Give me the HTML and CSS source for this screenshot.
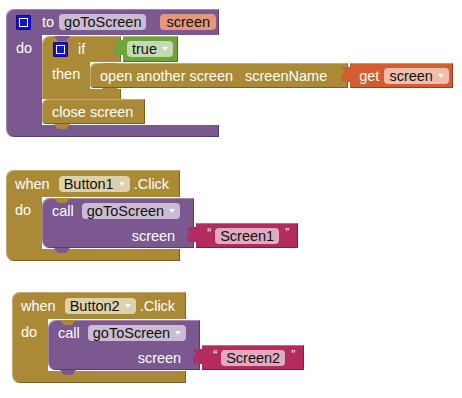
FILE: index.html
```html
<!DOCTYPE html>
<html lang="en">
<head>
    <meta charset="UTF-8">
    <meta name="viewport" content="width=device-width, initial-scale=1.0">
    <title>goToScreen blocks</title>
    <link rel="stylesheet" href="styles.css">
</head>
<body>
    <div class="workspace">
        <!-- procedure definition -->
        <div class="block proc group-1">
            <div class="head proc-head">
                <span class="mutator"></span>
                <span class="lbl lbl-to">to</span>
                <span class="field">goToScreen</span>
                <span class="field param">screen</span>
            </div>
            <div class="mid">
                <div class="spine">do</div>
                <div class="stack">
                    <div class="stmt ctrl if-block">
                        <div class="head">
                            <span class="mutator"></span>
                            <span class="lbl lbl-if">if</span>
                            <div class="plug">
                                <div class="val logic">
                                    <span class="field">true<i class="arrow"></i></span>
                                </div>
                            </div>
                        </div>
                        <div class="mid">
                            <div class="spine then">then</div>
                            <div class="stack">
                                <div class="stmt ctrl row open-block">
                                    <span class="lbl">open another screen</span>
                                    <span class="lbl arg">screenName</span>
                                    <div class="plug">
                                        <div class="val var get">
                                            <span class="lbl">get</span>
                                            <span class="field">screen<i class="arrow"></i></span>
                                        </div>
                                    </div>
                                </div>
                            </div>
                        </div>
                        <div class="foot"></div>
                    </div>
                    <div class="stmt ctrl row close-block">close screen</div>
                </div>
            </div>
            <div class="foot"></div>
        </div>

        <!-- Button1 click -->
        <div class="block ctrl group-2">
            <div class="head event-head">
                <span class="lbl">when</span>
                <span class="field">Button1<i class="arrow"></i></span>
                <span class="lbl lbl-click">.Click</span>
            </div>
            <div class="mid">
                <div class="spine event-do">do</div>
                <div class="stack">
                    <div class="stmt proc call-block">
                        <div class="call-head">
                            <span class="lbl">call</span>
                            <span class="field">goToScreen<i class="arrow"></i></span>
                        </div>
                        <div class="call-args">
                            <span class="lbl">screen</span>
                            <div class="plug">
                                <div class="val text">
                                    <span class="quote">&ldquo;</span>
                                    <span class="field">Screen1</span>
                                    <span class="quote">&rdquo;</span>
                                </div>
                            </div>
                        </div>
                    </div>
                </div>
            </div>
            <div class="foot"></div>
        </div>

        <!-- Button2 click -->
        <div class="block ctrl group-3">
            <div class="head event-head">
                <span class="lbl">when</span>
                <span class="field">Button2<i class="arrow"></i></span>
                <span class="lbl lbl-click">.Click</span>
            </div>
            <div class="mid">
                <div class="spine event-do">do</div>
                <div class="stack">
                    <div class="stmt proc call-block">
                        <div class="call-head">
                            <span class="lbl">call</span>
                            <span class="field">goToScreen<i class="arrow"></i></span>
                        </div>
                        <div class="call-args">
                            <span class="lbl">screen</span>
                            <div class="plug">
                                <div class="val text">
                                    <span class="quote">&ldquo;</span>
                                    <span class="field">Screen2</span>
                                    <span class="quote">&rdquo;</span>
                                </div>
                            </div>
                        </div>
                    </div>
                </div>
            </div>
            <div class="foot"></div>
        </div>
    </div>
</body>
</html>
```

FILE: styles.css
```css
/* Canvas */
* {
    box-sizing: border-box;
}

body {
    margin: 0;
    background: #fff;
    font-family: "Liberation Sans", Arial, sans-serif;
    font-size: 14.5px;
    color: #fff;
}

.workspace {
    position: relative;
    width: 462px;
    height: 398px;
    overflow: hidden;
    white-space: nowrap;
}

/* Block colours */
.proc { --c: #7b5890; }
.ctrl { --c: #aa8a36; }
.logic { --c: #6fa43d; }
.var { --c: #d25d2e; }
.text { --c: #b42c5d; }

/* Top-level groups sit freely on the canvas */
.block {
    position: absolute;
    display: flex;
    flex-direction: column;
    width: max-content;
}

.group-1 { left: 6px; top: 9px; }
.group-2 { left: 6px; top: 170px; }
.group-3 { left: 12px; top: 292px; }

/* C-shaped block parts */
.head {
    display: flex;
    align-items: center;
    height: 26px;
    padding-left: 10px;
    background: var(--c);
    border-radius: 8px 0 0 0;
    box-shadow: inset 1px 1px rgba(255, 255, 255, 0.28), inset -1px 0 rgba(0, 0, 0, 0.25);
}

.mid {
    display: flex;
}

.spine {
    width: 36px;
    padding-left: 10px;
    line-height: 26px;
    background: var(--c);
    box-shadow: inset 1px 0 rgba(255, 255, 255, 0.28);
}

.stack {
    --host: var(--c);
    width: 0;
    display: flex;
    flex-direction: column;
    padding: 1px 0;
}

.foot {
    height: 12px;
    background: var(--c);
    border-radius: 0 0 0 8px;
    box-shadow: inset 1px 0 rgba(255, 255, 255, 0.28), inset -1px -1px rgba(0, 0, 0, 0.3);
}

/* Statement blocks */
.stmt {
    position: relative;
    width: max-content;
    display: flex;
    flex-direction: column;
}

.stack > .stmt:first-child::before {
    content: "";
    position: absolute;
    left: 12px;
    top: 0;
    width: 16px;
    height: 5px;
    background: var(--host);
    clip-path: polygon(0 0, 100% 0, 75% 100%, 25% 100%);
    z-index: 1;
}

.stmt::after {
    content: "";
    position: absolute;
    left: 12px;
    top: 100%;
    width: 16px;
    height: 5px;
    background: var(--c);
    clip-path: polygon(0 0, 100% 0, 75% 100%, 25% 100%);
}

.stmt.row {
    flex-direction: row;
    align-items: center;
    height: 25px;
    padding-left: 10px;
    background: var(--c);
    border-radius: 6px 0 0 4px;
    box-shadow: inset 1px 1px rgba(255, 255, 255, 0.28), inset -1px -1px rgba(0, 0, 0, 0.3);
}

/* Value inputs */
.plug {
    display: flex;
    width: 0;
    align-self: stretch;
}

.val {
    position: relative;
    flex: none;
    display: flex;
    align-items: center;
    margin-left: 2px;
    background: var(--c);
    box-shadow: inset 0 1px rgba(255, 255, 255, 0.3), inset -1px -1px rgba(0, 0, 0, 0.3);
}

.val::before {
    content: "";
    position: absolute;
    left: -9px;
    top: 4px;
    width: 10px;
    height: 15px;
    background: var(--c);
    border-radius: 3px 0 0 3px;
    clip-path: polygon(0 0, 100% 0, 100% 100%, 0 100%, 0 45%, 3px 40%, 3px 22%, 0 18%);
}

/* Editable fields */
.field {
    display: inline-flex;
    align-items: center;
    height: 16px;
    padding: 0 5px;
    border-radius: 4px;
    background: rgba(255, 255, 255, 0.6);
    color: #111;
}

.field.param {
    background: #e4987a;
    padding: 0 6px;
}

.arrow {
    display: inline-block;
    margin-left: 5px;
    border-left: 3.5px solid transparent;
    border-right: 3.5px solid transparent;
    border-top: 4px solid rgba(255, 255, 255, 0.85);
}

.mutator {
    display: flex;
    align-items: center;
    justify-content: center;
    width: 15px;
    height: 15px;
    background: #1414c8;
    border-radius: 2px;
    box-shadow: inset 0 0 0 1px #0a0a96;
}

.mutator::after {
    content: "";
    width: 7px;
    height: 7px;
    border: 1.5px solid #fff;
}

/* Procedure header */
.proc-head {
    padding-right: 3px;
}

.lbl-to {
    margin: 0 5px 0 11px;
}

.proc-head .param {
    margin-left: 14px;
}

/* if / then */
.if-block {
    min-width: 79px;
}

.if-block > .head {
    padding-left: 11px;
}

.lbl-if {
    margin-left: 10px;
}

.if-block > .head .plug {
    margin-left: auto;
}

.logic {
    padding: 0 5px 0 4px;
}

.spine.then {
    width: 48px;
    line-height: 25px;
}

.if-block > .foot {
    height: 10px;
    border-radius: 0;
    box-shadow: inset 1px 0 rgba(255, 255, 255, 0.28), inset -1px 0 rgba(0, 0, 0, 0.25);
}

/* open another screen */
.open-block .arg {
    margin-left: 12px;
}

.open-block .plug {
    margin-left: 21px;
}

.get {
    padding: 0 4px 0 9px;
}

.get .field {
    margin-left: 5px;
}

.close-block {
    padding-right: 12px;
}

/* Event blocks */
.event-head {
    height: 27px;
    padding: 0 11px 0 9px;
}

.event-head .field {
    margin-left: 9px;
}

.lbl-click {
    margin-left: 4px;
}

.spine.event-do {
    padding-left: 9px;
}

/* Procedure call */
.call-block {
    background: var(--c);
    border-radius: 8px 0 0 8px;
    box-shadow: inset 1px 1px rgba(255, 255, 255, 0.28), inset -1px -1px rgba(0, 0, 0, 0.3);
}

.call-head {
    display: flex;
    align-items: center;
    gap: 8px;
    height: 25px;
    padding: 0 14px 0 10px;
}

.call-args {
    display: flex;
    align-items: center;
    height: 25px;
}

.call-args > .lbl {
    margin-left: auto;
}

.call-args .plug {
    margin-left: 19px;
}

.text {
    padding: 0 9px 0 11px;
}

.quote {
    align-self: flex-start;
    margin-top: 4px;
    font-size: 12px;
    line-height: 1;
}

.text .field {
    margin: 0 6px 0 4px;
}
```
